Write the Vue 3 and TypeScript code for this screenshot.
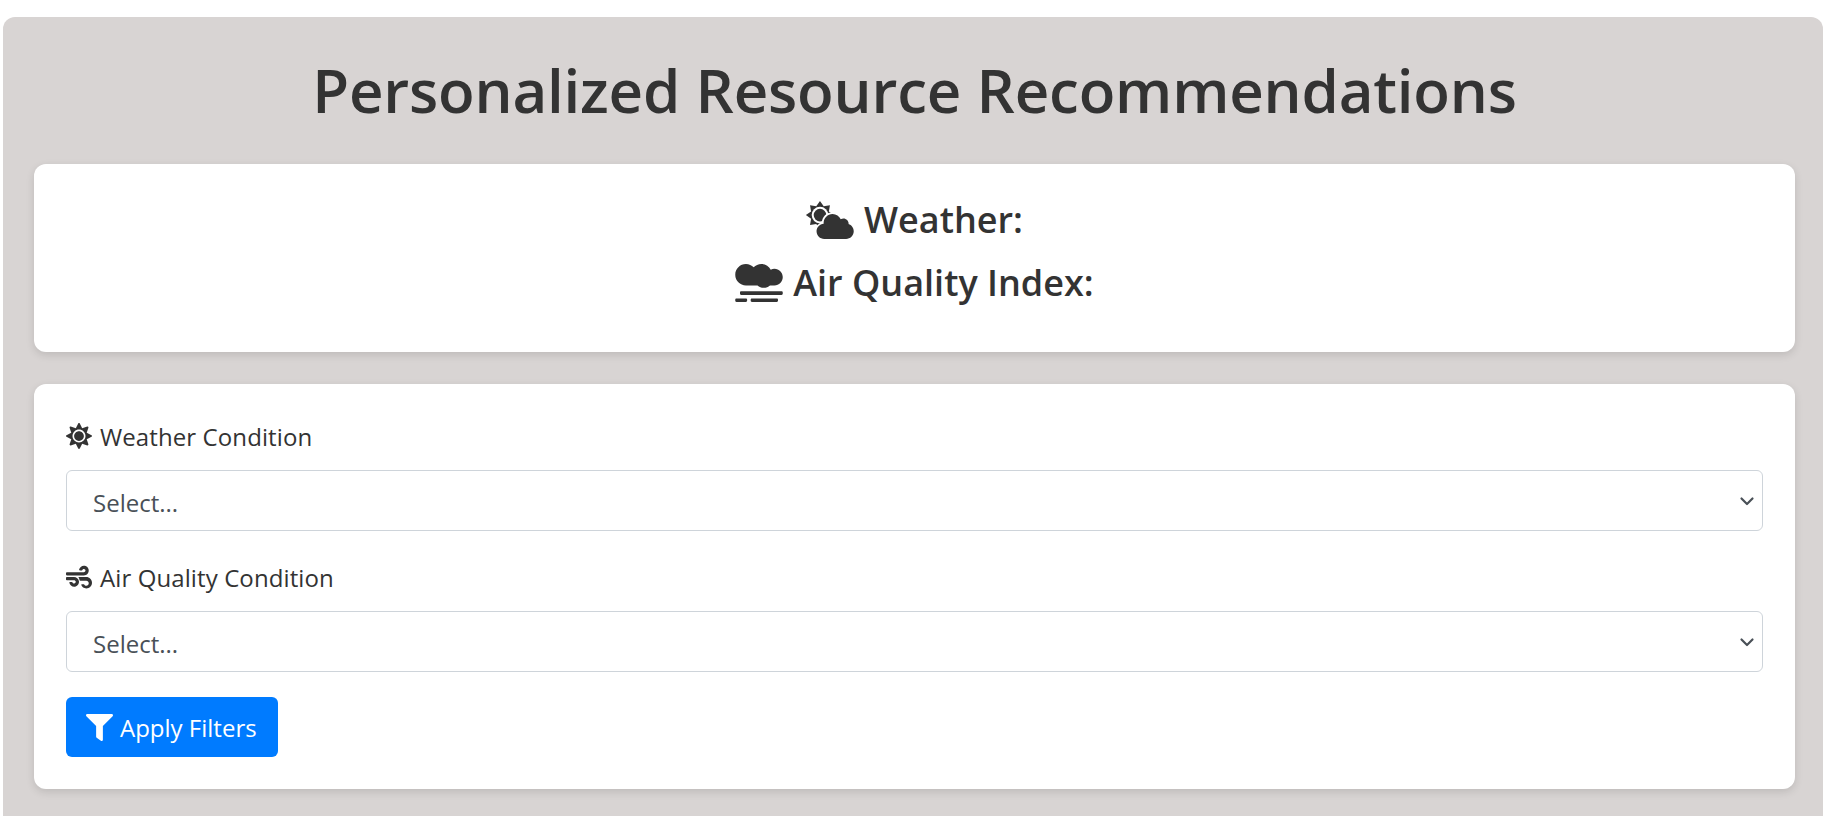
<script setup lang="ts">
import { ref } from 'vue'

const weatherOptions = ['Sunny', 'Cloudy', 'Rainy', 'Snowy']
const airOptions = ['Good', 'Moderate', 'Unhealthy', 'Hazardous']

const weather = ref('')
const air = ref('')
</script>

<template>
  <div class="page">
    <h1 class="title">Personalized Resource Recommendations</h1>

    <section class="card status">
      <h2 class="status-line">
        <svg class="icon-lg" viewBox="0 0 640 512" aria-hidden="true">
          <path d="M185 0L235 70 319 56 305 140 375 190 305 240 319 324 235 310 185 380 135 310 51 324 65 240-5 190 65 140 51 56 135 70z" />
          <circle cx="185" cy="190" r="112" fill="#fff" />
          <circle cx="185" cy="190" r="85" />
          <g transform="translate(-51 -41) scale(1.08)">
            <path d="M575 326c.2-2 .8-4 .8-6 0-35-29-64-64-64-12.600 0-24 4-34 10-18-39-57-66-102-66-62 0-112 50-112 112 0 3 .7 6 .9 9-50 4-89 45-89 95 0 53 43 96 96 96h272c53 0 96-43 96-96 0-43-28-78-65-90z" fill="#fff" stroke="#fff" stroke-width="44" />
            <path d="M575 326c.2-2 .8-4 .8-6 0-35-29-64-64-64-12.600 0-24 4-34 10-18-39-57-66-102-66-62 0-112 50-112 112 0 3 .7 6 .9 9-50 4-89 45-89 95 0 53 43 96 96 96h272c53 0 96-43 96-96 0-43-28-78-65-90z" />
          </g>
        </svg>
        Weather:
      </h2>
      <h2 class="status-line">
        <svg class="icon-lg" viewBox="0 0 640 512" aria-hidden="true">
          <path d="M624 368H80c-8.800 0-16 7.200-16 16v16c0 8.800 7.200 16 16 16h544c8.800 0 16-7.200 16-16v-16c0-8.800-7.200-16-16-16zm-480 96H16c-8.800 0-16 7.200-16 16v16c0 8.800 7.200 16 16 16h128c8.800 0 16-7.200 16-16v-16c0-8.800-7.200-16-16-16zm416 0H224c-8.800 0-16 7.200-16 16v16c0 8.800 7.200 16 16 16h336c8.800 0 16-7.200 16-16v-16c0-8.800-7.200-16-16-16zM144 288h156.100c22.500 19.700 51.600 32 83.900 32s61.300-12.300 83.900-32H528c61.900 0 112-50.100 112-112S589.900 64 528 64c-18 0-34.700 4.600-49.700 12.100C454 31 406.800 0 352 0c-41 0-77.800 17.300-104 44.800C221.800 17.300 185 0 144 0 64.500 0 0 64.500 0 144s64.500 144 144 144z" />
        </svg>
        Air Quality Index:
      </h2>
    </section>

    <section class="card filters">
      <div class="field">
        <label class="field-label" for="weather">
          <svg class="icon-sm" viewBox="0 0 512 512" aria-hidden="true">
            <path d="M256 160c-52.900 0-96 43.100-96 96s43.100 96 96 96 96-43.100 96-96-43.100-96-96-96zm246.400 80.500l-94.700-47.300 33.500-100.400c4.500-13.600-8.400-26.500-21.900-21.900l-100.400 33.500-47.400-94.800c-6.400-12.800-24.600-12.800-31 0l-47.300 94.700L92.700 70.800c-13.600-4.500-26.500 8.400-21.900 21.900l33.500 100.400-94.700 47.400c-12.800 6.400-12.800 24.600 0 31l94.700 47.300-33.500 100.500c-4.500 13.600 8.400 26.500 21.900 21.900l100.400-33.500 47.300 94.700c6.400 12.800 24.600 12.800 31 0l47.300-94.700 100.400 33.500c13.600 4.500 26.500-8.400 21.900-21.900l-33.500-100.400 94.700-47.300c13-6.500 13-24.700.2-31.100zm-155.900 106c-49.900 49.900-131.100 49.900-181 0-49.900-49.900-49.900-131.100 0-181 49.900-49.900 131.100-49.900 181 0 49.900 49.900 49.900 131.100 0 181z" />
          </svg>
          Weather Condition
        </label>
        <select id="weather" v-model="weather" class="select">
          <option value="">Select...</option>
          <option v-for="opt in weatherOptions" :key="opt" :value="opt">{{ opt }}</option>
        </select>
      </div>

      <div class="field">
        <label class="field-label" for="air">
          <svg class="icon-sm" viewBox="0 0 512 512" aria-hidden="true">
            <path d="M156.700 256H16c-8.800 0-16 7.200-16 16v32c0 8.800 7.200 16 16 16h142.200c15.900 0 30.800 10.900 33.400 26.600 3.300 20-12.100 37.400-31.600 37.400-14.100 0-26.100-9.200-30.400-21.900-2.100-6.300-8.600-10.100-15.200-10.100H81.600c-9.800 0-17.700 8.800-15.900 18.400 8.600 44.100 47.600 77.600 94.200 77.600 57.100 0 102.700-50.100 95.200-108.600C249 291 205.400 256 156.700 256zM16 224h336c59.700 0 106.800-54.800 93.800-116.700-7.600-36.200-36.900-65.500-73.100-73.100-55.400-11.600-105.100 24.900-114.900 75.500-1.900 9.600 6.100 18.300 15.800 18.300h32.800c6.700 0 13.100-3.800 15.200-10.100C325.900 105.200 337.900 96 352 96c19.400 0 34.900 17.400 31.600 37.400-2.600 15.700-17.400 26.600-33.400 26.600H16c-8.800 0-16 7.200-16 16v32c0 8.800 7.200 16 16 16zm384 32H243.500c12.400 17.400 20.100 37.800 22.200 59.500.8 8.500 7.800 15.200 16.300 15.200H400c26.500 0 48 21.500 48 48s-21.500 48-48 48c-18.200 0-34-10.100-42.100-25-1.600-2.900-4.600-4.900-7.900-4.900h-33.800c-10 0-17.500 9.500-14.900 19.100C312.600 456 352.400 480 400 480c61.800 0 112-50.200 112-112s-50.200-112-112-112z" />
          </svg>
          Air Quality Condition
        </label>
        <select id="air" v-model="air" class="select">
          <option value="">Select...</option>
          <option v-for="opt in airOptions" :key="opt" :value="opt">{{ opt }}</option>
        </select>
      </div>

      <button type="button" class="apply-btn">
        <svg class="icon-btn" viewBox="0 0 512 512" aria-hidden="true">
          <path d="M487.976 0H24.028C2.710 0-8.047 25.866 7.058 40.971L192 225.941V432c0 7.831 3.821 15.170 10.237 19.662l80 55.980C298.020 518.690 320 507.493 320 487.980V225.941l184.947-184.970C520.021 25.896 509.338 0 487.976 0z" />
        </svg>
        Apply Filters
      </button>
    </section>
  </div>
</template>

<style>
html,
body {
  height: 100%;
  overflow: hidden;
  background: #fff;
}
</style>

<style scoped>
.page {
  margin: 17px 0 0 3px;
  padding: 32px 28px 60px 31px;
  background: #d8d4d3;
  border-radius: 12px 12px 0 0;
  color: #333;
  font-family: "Open Sans", "Noto Sans", sans-serif;
}

.title {
  margin: 0 0 31px;
  font-size: 60px;
  line-height: 82px;
  padding-bottom: 2px;
  font-weight: 600;
  letter-spacing: -0.19px;
  text-align: center;
  color: #333;
}

.card {
  background: #fff;
  border-radius: 12px;
  box-shadow: 0 3px 8px rgba(0, 0, 0, 0.12);
}

.status {
  padding: 34px 32px 48px;
  margin-bottom: 32px;
}

.status-line {
  display: flex;
  align-items: center;
  justify-content: center;
  gap: 10px;
  margin: 0 0 20px;
  font-size: 36px;
  line-height: 43px;
  font-weight: 600;
}

.status-line:last-child {
  margin-bottom: 0;
}

.icon-lg {
  width: 48px;
  height: 38px;
  fill: #333;
  overflow: visible;
}

.filters {
  padding: 33px 32px 32px;
}

.field {
  margin-bottom: 28px;
}

.field:nth-of-type(2) {
  margin-bottom: 25px;
}

.field-label {
  display: flex;
  align-items: center;
  gap: 8px;
  height: 38px;
  margin-bottom: 15px;
  font-size: 24px;
  letter-spacing: 0.1px;
}

.field:nth-of-type(2) .field-label {
  margin-top: -1px;
}

.icon-sm {
  width: 26px;
  height: 26px;
  fill: #333;
}

.select {
  display: block;
  width: 100%;
  height: 61px;
  padding: 3px 60px 0 26px;
  border: 1px solid #ced4da;
  border-radius: 6px;
  background: #fff url("data:image/svg+xml,%3csvg xmlns='http://www.w3.org/2000/svg' viewBox='0 0 16 16'%3e%3cpath fill='none' stroke='%23495057' stroke-linecap='round' stroke-linejoin='round' stroke-width='2.200' d='M2.500 5.500l5.500 5.500 5.500-5.500'/%3e%3c/svg%3e") no-repeat right 7px center / 16px 16px;
  appearance: none;
  font-family: inherit;
  font-size: 24px;
  color: #495057;
}

.apply-btn {
  display: inline-flex;
  align-items: center;
  gap: 7px;
  height: 60px;
  padding: 1px 21px 0 20px;
  border: none;
  border-radius: 6px;
  background: #007bff;
  color: #fff;
  font-family: inherit;
  font-size: 24px;
  cursor: pointer;
}

.icon-btn {
  width: 27px;
  height: 27px;
  fill: #fff;
}
</style>
